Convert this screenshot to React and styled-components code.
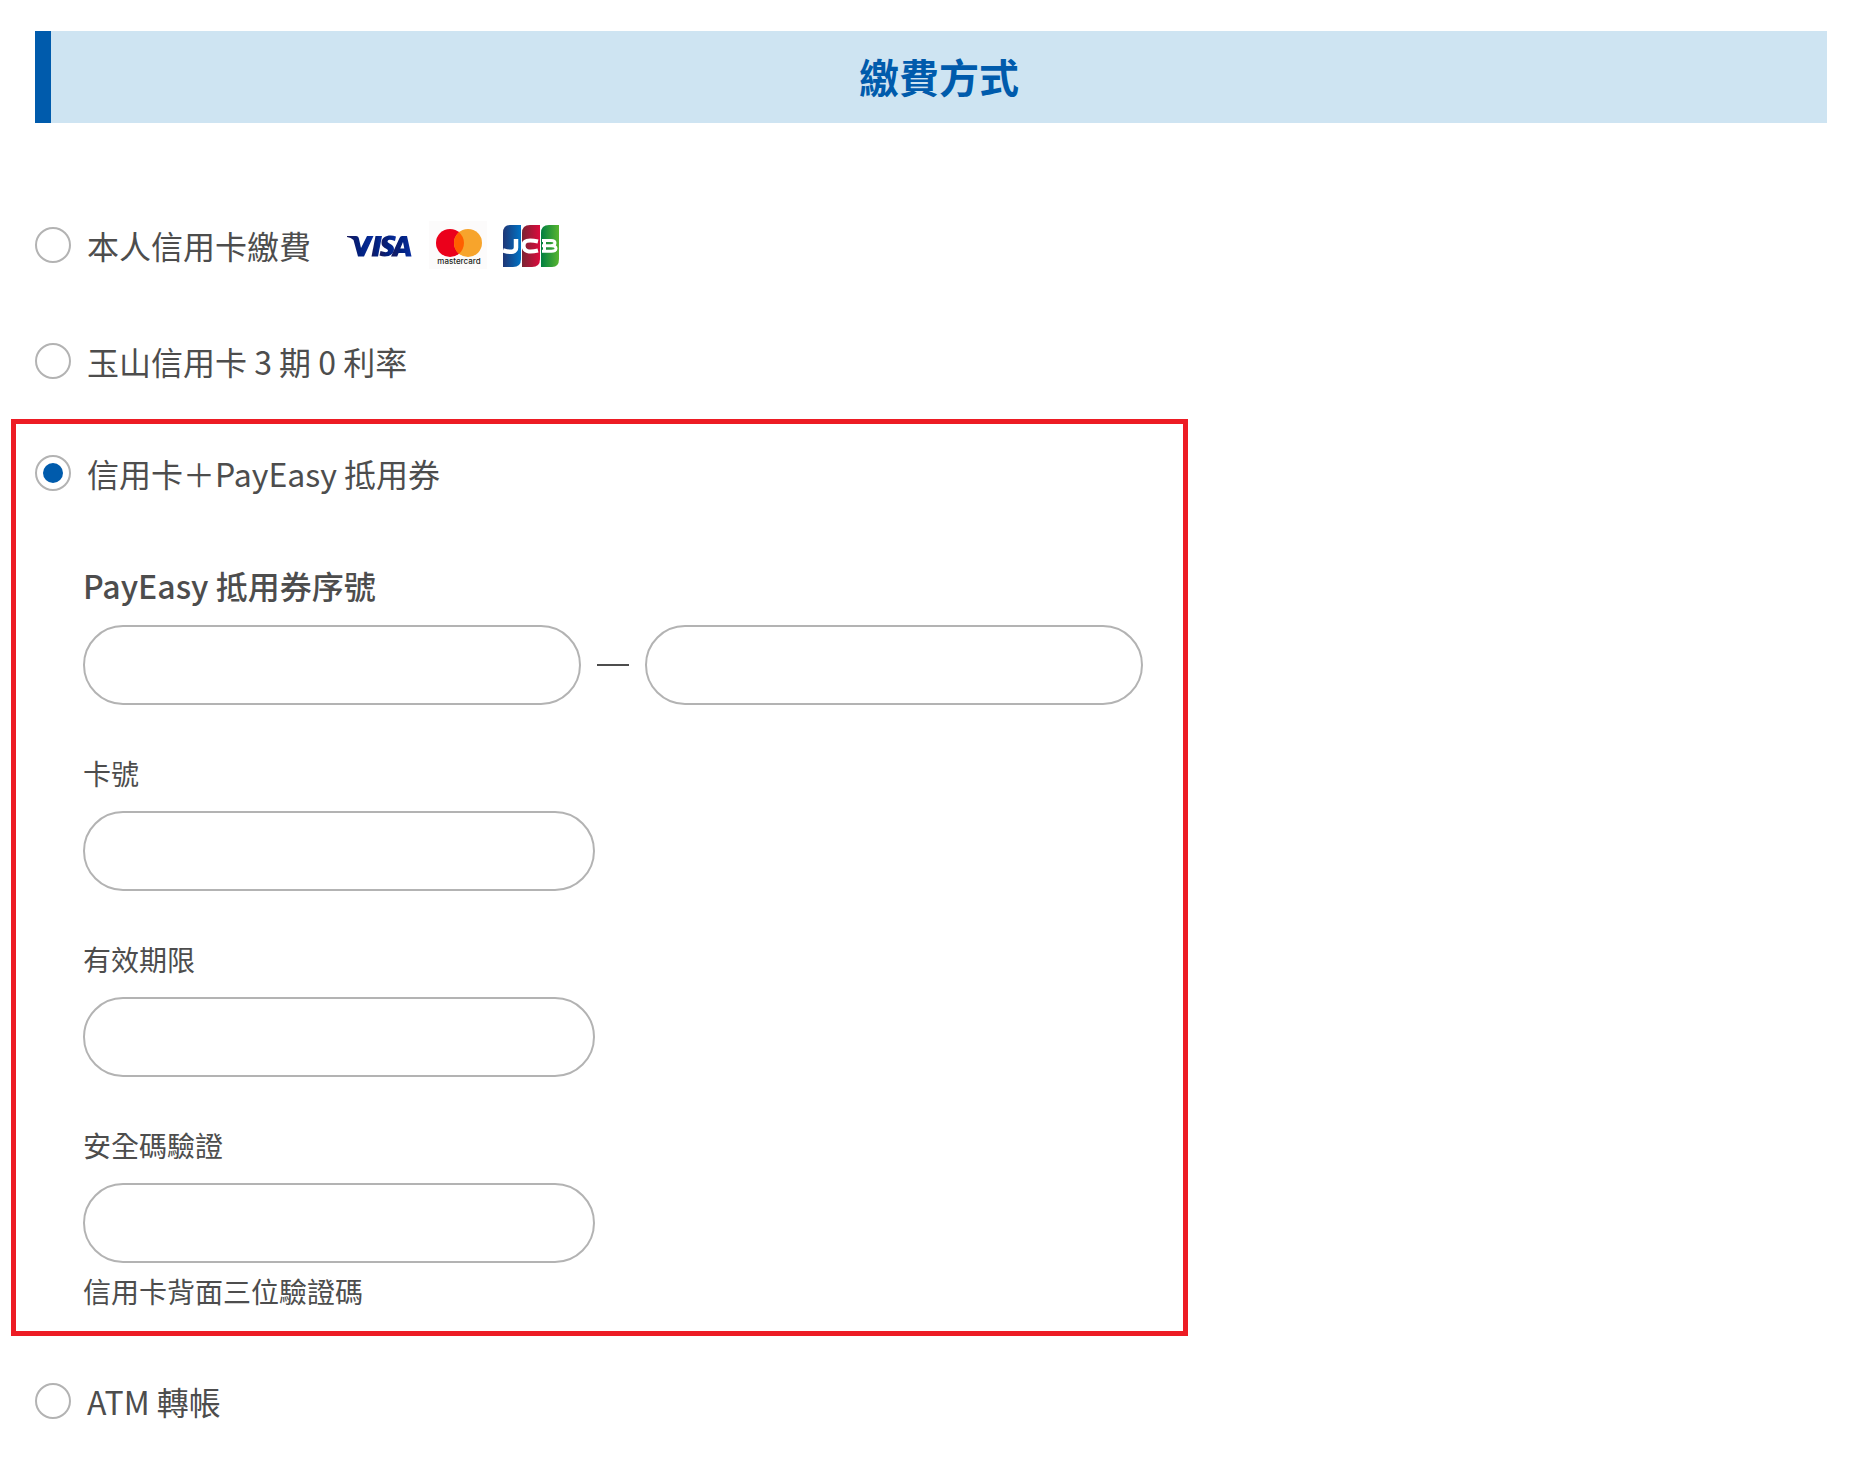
import React, { useState } from "react";
import styled, { createGlobalStyle } from "styled-components";

const GlobalStyle = createGlobalStyle`
  *, *::before, *::after { box-sizing: border-box; }
  body {
    margin: 0;
    background: #fff;
    color: #4d4d4d;
    font-family: "Noto Sans CJK TC", "Noto Sans", sans-serif;
    font-size: 32px;
    line-height: 48px;
  }
`;

const Page = styled.main`
  padding: 31px 26px 40px 35px;
`;

const Banner = styled.h1`
  margin: 0 0 98px;
  padding: 15px 0 17px;
  border-left: 16px solid #005bac;
  background: #cee4f2;
  color: #005bac;
  font-size: 40px;
  line-height: 60px;
  font-weight: 700;
  text-align: center;
`;

const Options = styled.form`
  display: flex;
  flex-direction: column;
  align-items: flex-start;
`;

const OptionRow = styled.div`
  display: flex;
  align-items: center;
  gap: 36px;
  margin-bottom: ${(p) => p.$after || 0}px;
`;

const OptionLabel = styled.label`
  display: flex;
  align-items: center;
  gap: 16px;
  cursor: pointer;
`;

const Radio = styled.input`
  appearance: none;
  width: 36px;
  height: 36px;
  margin: 0;
  padding: 6px;
  border: 2px solid #b3b3b3;
  border-radius: 50%;
  background: #fff;
  cursor: pointer;

  &:checked {
    background: #005bac content-box;
  }
`;

const Cards = styled.div`
  display: flex;
  align-items: center;
  gap: 16px;
`;

const Highlight = styled.section`
  margin: 0 0 41px -24px;
  padding: 25px 40px 18px 19px;
  border: 5px solid #ed1c24;
`;

const Fields = styled.div`
  display: flex;
  flex-direction: column;
  gap: 46px;
  padding-left: 48px;
`;

const Field = styled.div`
  display: flex;
  flex-direction: column;
  align-items: flex-start;
`;

const FieldLabel = styled.label`
  margin-bottom: 16px;
  font-size: ${(p) => (p.$strong ? 32 : 28)}px;
  line-height: ${(p) => (p.$strong ? 48 : 44)}px;
  font-weight: ${(p) => (p.$strong ? 500 : 400)};
`;

const Pair = styled.div`
  display: flex;
  align-items: center;
  gap: 16px;
`;

const Dash = styled.span`
  width: 32px;
  height: 2px;
  background: currentColor;
`;

const TextInput = styled.input`
  width: ${(p) => (p.$paired ? 498 : 512)}px;
  height: 80px;
  padding: 0 32px;
  border: 2px solid #b3b3b3;
  border-radius: 40px;
  background: #fff;
  color: inherit;
  font: inherit;
`;

const Hint = styled.p`
  margin: 6px 0 0;
  font-size: 28px;
  line-height: 44px;
`;

function Visa() {
  return (
    <svg width="66" height="24" viewBox="0 -2 66 24" role="img" aria-label="VISA">
      <defs>
        <linearGradient id="visa" x1="0" x2="1">
          <stop offset="0" stopColor="#1a1a5c" />
          <stop offset="0.5" stopColor="#00207f" />
          <stop offset="1" stopColor="#0a2fa0" />
        </linearGradient>
      </defs>
      <g fill="url(#visa)">
        <path d="M0 1h9q2.500 0 3 3l2 9 6-12h6.500L17 21.500h-6L6.500 5Q4 2.500 0 2z" />
        <path d="M28.500 1H35l-4 20.500h-6.500z" />
        <path d="M49 1.500 48 6q-7.500-2.500-7.500.5c0 2 6.500 2.500 6.500 7.500 0 7-8.500 9-14.500 6.500l1-4.500q7.500 2.500 7.500-.5c0-2-6.500-2.500-6.500-7.500C34.500.5 43-.5 49 1.500z" />
        <path d="M55 1h5l4.500 20.500h-5.700l-.7-3.500h-6.500l-1.400 3.500H44L52.500 3Q53.400 1 55 1zm1 6-2.700 6.500h4z" />
      </g>
    </svg>
  );
}

function Mastercard() {
  return (
    <svg width="58" height="48" viewBox="0 0 58 48" role="img" aria-label="mastercard">
      <rect width="58" height="48" fill="#fcfbfb" />
      <circle cx="21" cy="22" r="14" fill="#eb001b" />
      <circle cx="39" cy="22" r="14" fill="#f7a42c" />
      <path d="M30 11.300a14 14 0 0 1 0 21.400 14 14 0 0 1 0-21.400z" fill="#ff5f00" />
      <text x="30" y="43" textAnchor="middle" fontFamily="Inter, sans-serif" fontSize="8" fontWeight="500" fill="#231f20">
        mastercard
      </text>
    </svg>
  );
}

function Jcb() {
  return (
    <svg width="56" height="44" viewBox="0 -2 56 44" role="img" aria-label="JCB">
      <defs>
        <linearGradient id="jcbBlue" x1="0" x2="1">
          <stop offset="0" stopColor="#1f3675" />
          <stop offset="1" stopColor="#0073c5" />
        </linearGradient>
        <linearGradient id="jcbRed" x1="0" x2="1">
          <stop offset="0" stopColor="#7a2433" />
          <stop offset="1" stopColor="#dc0a3c" />
        </linearGradient>
        <linearGradient id="jcbGreen" x1="0" x2="1">
          <stop offset="0" stopColor="#007f40" />
          <stop offset="1" stopColor="#58b530" />
        </linearGradient>
      </defs>
      <path d="M7 0h11v34q0 8-8 8H0V8q0-8 7-8z" fill="url(#jcbBlue)" />
      <path d="M27 0h10v34q0 8-8 8H19V8q0-8 8-8z" fill="url(#jcbRed)" />
      <path d="M46 0h10v34q0 8-7 8H38V8q0-8 8-8z" fill="url(#jcbGreen)" />
      <g fill="none" stroke="#fff">
        <path d="M0 25.500q6 2 10 1 3-1 3-4V14" strokeWidth="4.500" />
        <path d="M35 16.500Q20 13 20.500 21T35 25.500" strokeWidth="4" />
        <path d="M39 15.500h9q4 0 4 2.500t-4 2.700h-9M48 20.700q5 0 5 2.800t-5 2.700h-9M41.500 15v12" strokeWidth="3" />
      </g>
    </svg>
  );
}

const PLAIN_FIELDS = [
  { id: "card-number", label: "卡號" },
  { id: "expiry", label: "有效期限" },
  { id: "cvc", label: "安全碼驗證", hint: "信用卡背面三位驗證碼" },
];

function Option({ value, selected, onSelect, after, label, children }) {
  return (
    <OptionRow $after={after}>
      <OptionLabel>
        <Radio
          type="radio"
          name="payment"
          value={value}
          checked={selected === value}
          onChange={() => onSelect(value)}
        />
        {label}
      </OptionLabel>
      {children}
    </OptionRow>
  );
}

export default function App() {
  const [selected, setSelected] = useState("payeasy");
  const shared = { selected, onSelect: setSelected };

  return (
    <>
      <GlobalStyle />
      <Page>
        <Banner>繳費方式</Banner>
        <Options>
          <Option {...shared} value="card" label="本人信用卡繳費" after={68}>
            <Cards>
              <Visa />
              <Mastercard />
              <Jcb />
            </Cards>
          </Option>
          <Option {...shared} value="esun" label="玉山信用卡 3 期 0 利率" after={34} />
          <Highlight>
            <Option {...shared} value="payeasy" label="信用卡＋PayEasy 抵用券" after={64} />
            <Fields>
              <Field>
                <FieldLabel $strong htmlFor="coupon-a">PayEasy 抵用券序號</FieldLabel>
                <Pair>
                  <TextInput $paired id="coupon-a" type="text" />
                  <Dash aria-hidden="true" />
                  <TextInput $paired type="text" aria-label="PayEasy 抵用券序號" />
                </Pair>
              </Field>
              {PLAIN_FIELDS.map((f) => (
                <Field key={f.id}>
                  <FieldLabel htmlFor={f.id}>{f.label}</FieldLabel>
                  <TextInput id={f.id} type="text" />
                  {f.hint && <Hint>{f.hint}</Hint>}
                </Field>
              ))}
            </Fields>
          </Highlight>
          <Option {...shared} value="atm" label="ATM 轉帳" />
        </Options>
      </Page>
    </>
  );
}
